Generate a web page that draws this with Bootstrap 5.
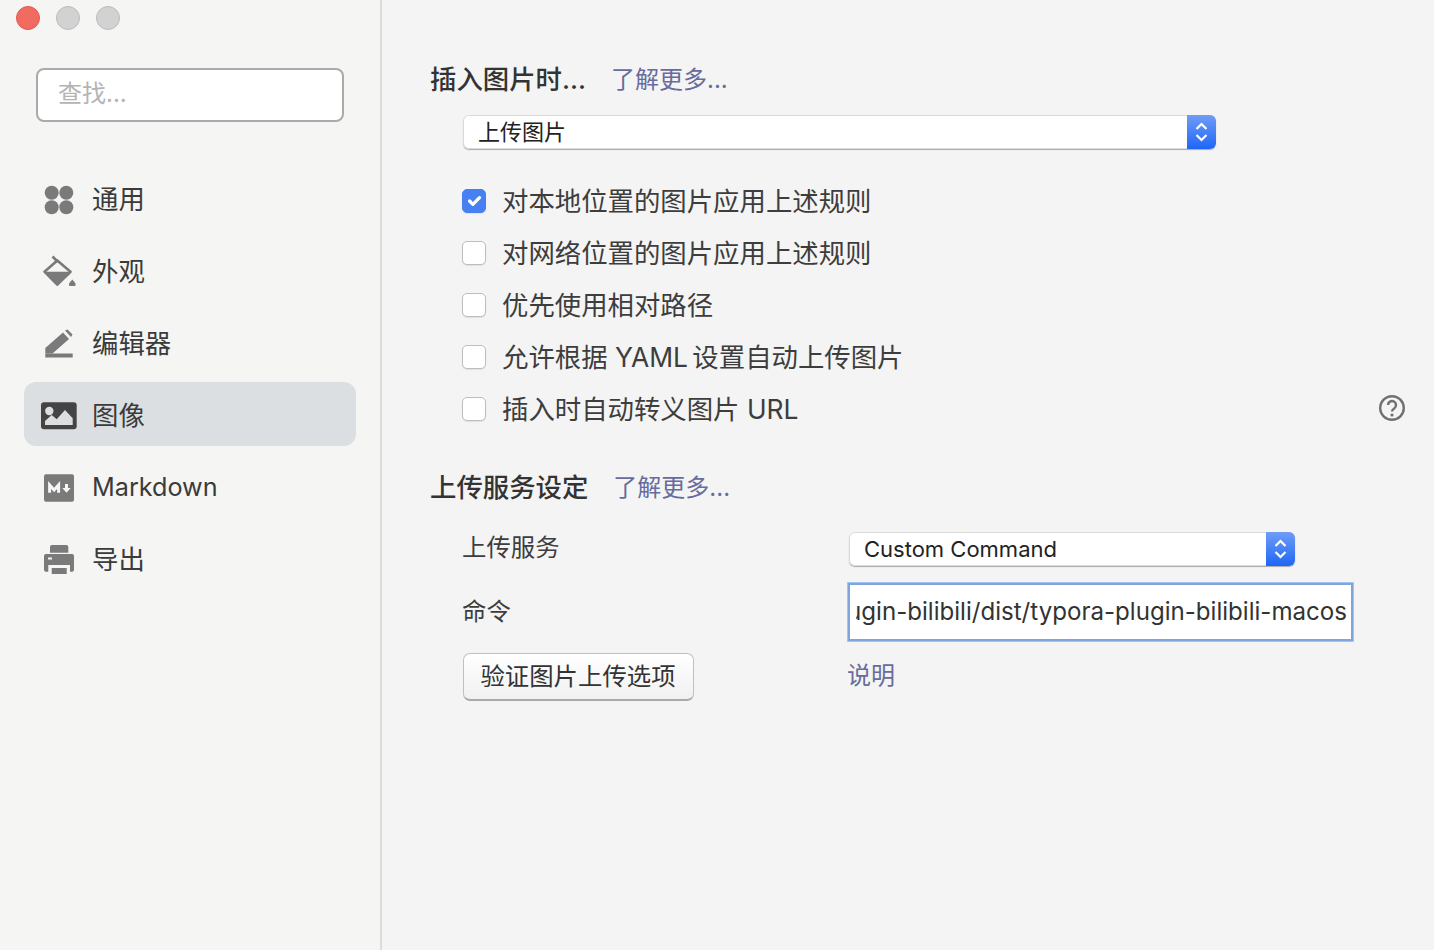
<!DOCTYPE html>
<html lang="zh">
<head>
<meta charset="utf-8">
<title>偏好设置</title>
<link rel="stylesheet" href="https://cdn.jsdelivr.net/npm/bootstrap@5.3.0/dist/css/bootstrap.min.css">
<style>
html,body{height:100%;overflow:hidden}
body{background:#f4f4f4;color:#333;font-family:"Inter","Noto Sans CJK SC",sans-serif;font-size:26.4px;line-height:36px}
.shell{height:950px}
.side{width:382px;flex:none;background:#f5f5f4;border-right:2px solid #dcdcdc}
.lights{padding:6px 0 0 16px;gap:16px}
.dot-light{width:24px;height:24px;border-radius:50%;background:#d2d2d2;border:1px solid #bcbcbc}
.dot-red{background:#f26b60;border-color:#e05a50}
.find-box{margin:38px 0 0 36px;width:308px;height:54px;border:2px solid #aaa;border-radius:8px;background:#fff;font-size:24px;padding:0 20px 4px;color:#333;font-family:inherit}
.find-box::placeholder{color:#b4b4b4;opacity:1}
.find-box:focus{outline:none}
.menu-list{margin:44px 0 0 24px;width:332px;gap:8px}
.menu-row{height:64px;border-radius:12px;padding:2px 0 0 15px;color:#3b3b3b;gap:13px;text-decoration:none}
.menu-row.on{background:#dcdfe2}
.menu-row svg{width:40px;height:40px;flex:none}
.md-name{font-size:25.2px}
.ico{fill:#7a7a7a}
.main-pane{padding:0 28px 0 48px;min-width:0}
.sec-head{height:36px;font-weight:500;color:#333}
.sec-link{font-size:24px;font-weight:400;color:#676b9d;text-decoration:none;margin:2px 0 0 25px}
.pick{height:34px;background:#fff;border-radius:6px;box-shadow:inset 0 0 0 1px #dadada,0 1px 1px 0 #aaa;font-size:22px;color:#222;padding-left:15px;overflow:hidden}
.pick-wide{margin:18px 0 0 33px;width:753px}
.pick-mid{width:446px;margin-left:1px}
.pick-btn{width:29px;height:34px;margin-left:auto;background:linear-gradient(#6f9df6,#1f66f6)}
.pick-btn svg{width:29px;height:34px;display:block}
.opts{margin:34px 0 0 32px;gap:16px}
.opt{height:36px;margin:0;padding:0;gap:16px}
.opt .form-check-input{width:24px;height:24px;margin:0 0 1px;border:1px solid #bdbdbd;border-radius:5px;float:none;background-color:#fff;flex:none;box-shadow:0 1px 1px #e2e2e2}
.opt .form-check-input:checked{background-color:#4680f2;border-color:#4680f2}
.opt .form-check-label{color:#3d3d3d}
.yaml-word{margin-right:-3px}
.help-ico{width:28px;height:28px;margin:0 0 2px auto;flex:none}
.head-two{margin-top:42px}
.set-row{margin-left:32px}
.row-one{margin-top:27px;height:34px}
.row-two{margin-top:17px}
.row-three{margin-top:12px}
.set-name{width:386px;flex:none;font-size:24.4px;color:#3d3d3d;padding-bottom:2px}
.row-one .set-name{padding-bottom:4px}
.row-three .set-name{padding-bottom:0}
.cmd-box{width:505px;height:58px;border:2px solid #7ea6dc;box-shadow:0 0 0 1px #a5c5f0;background:#fff;font-size:24.1px;color:#333;padding:0 4px 0 6px}
.cmd-clip{overflow:hidden;white-space:nowrap;justify-content:flex-end;width:100%}
.verify{width:231px;height:48px;padding:0 1px 0 0;margin-left:1px;background:linear-gradient(#fff,#f1f1f1);border:1px solid #c0c0c0;border-bottom:2px solid #aaa;border-radius:7px;font-size:24.4px;color:#333;line-height:1}
.doc-link{font-size:24px;color:#676b9d;text-decoration:none;margin:0 0 2px -1px}
</style>
</head>
<body>
<div class="shell d-flex">
  <aside class="side">
    <div class="lights d-flex"><span class="dot-light dot-red"></span><span class="dot-light"></span><span class="dot-light"></span></div>
    <input class="find-box d-block" type="text" placeholder="查找...">
    <nav class="menu-list d-flex flex-column">
      <a class="menu-row d-flex align-items-center" href="#"><svg viewBox="0 0 40 40"><g class="ico"><circle cx="12.7" cy="13.7" r="7"/><circle cx="27.3" cy="13.7" r="7"/><circle cx="12.7" cy="28.3" r="7"/><circle cx="27.3" cy="28.3" r="7"/></g></svg><span>通用</span></a>
      <a class="menu-row d-flex align-items-center" href="#"><svg viewBox="0 0 40 40"><path d="M13.5 5.5l5.5 5.5" stroke="#7a7a7a" stroke-width="2.6" fill="none"/><path d="M18.3 9.5L5.5 20.7 18.3 33.5 31.5 20.7z" fill="none" stroke="#7a7a7a" stroke-width="2.6" stroke-linejoin="round"/><path class="ico" d="M4.3 20.7h28.4L18.3 35z"/><path class="ico" d="M33.3 28.5c1.2 1.7 3.4 3.6 3.4 5a1.5 1.5 0 0 1-1.5 1.5h-3.8a1.5 1.5 0 0 1-1.5-1.5c0-1.4 2.2-3.3 3.4-5z"/></svg><span>外观</span></a>
      <a class="menu-row d-flex align-items-center" href="#"><svg viewBox="0 0 40 40"><g class="ico"><rect x="6.3" y="30.5" width="27.4" height="4"/><polygon points="6.3,30.5 6.3,25 24,9.5 30,16 13.5,30.5"/><polygon points="26,7.5 28.5,6.5 33.5,11.5 32,14"/></g></svg><span>编辑器</span></a>
      <a class="menu-row on d-flex align-items-center" href="#"><svg viewBox="0 0 40 40"><rect x="2" y="7.3" width="35.7" height="27" rx="3" fill="#444"/><circle cx="10.3" cy="16" r="4.2" fill="#dcdfe2"/><polygon points="6,30 6,26 12.7,20 17.7,24.3 26,15 33.7,23.3 33.7,30" fill="#dcdfe2"/></svg><span>图像</span></a>
      <a class="menu-row d-flex align-items-center" href="#"><svg viewBox="0 0 40 40"><rect class="ico" x="5" y="7.3" width="30" height="27.4" rx="2"/><path d="M10.6 25.7V18l4.5 5 4.5-5v7.7" fill="none" stroke="#f5f5f4" stroke-width="3"/><path d="M27.5 17v5" stroke="#f5f5f4" stroke-width="3"/><path d="M23.3 21h8.4l-4.2 4.7z" fill="#f5f5f4"/></svg><span class="md-name">Markdown</span></a>
      <a class="menu-row d-flex align-items-center" href="#"><svg viewBox="0 0 40 40"><path class="ico" d="M11 13.7V8a2 2 0 0 1 2-2h14.3a2 2 0 0 1 2 2v5.7z"/><rect class="ico" x="5" y="15" width="30" height="17.7" rx="2"/><rect x="9.3" y="26" width="21.7" height="9" fill="#f5f5f4"/><rect class="ico" x="12.7" y="29" width="15" height="6"/><rect x="9" y="18.5" width="4" height="2" fill="#f5f5f4"/></svg><span>导出</span></a>
    </nav>
  </aside>
  <main class="main-pane flex-grow-1">
    <div class="sec-head d-flex align-items-center" style="margin-top:61px"><span>插入图片时...</span><a class="sec-link" href="#">了解更多...</a></div>
    <div class="pick pick-wide d-flex align-items-center"><span>上传图片</span><span class="pick-btn"><svg viewBox="0 0 29 34"><path d="M9.5 14l5-5 5 5M9.5 20l5 5 5-5" fill="none" stroke="#fff" stroke-width="2.2"/></svg></span></div>
    <div class="opts d-flex flex-column">
      <div class="form-check opt d-flex align-items-center"><input class="form-check-input" type="checkbox" id="c1" checked><label class="form-check-label" for="c1">对本地位置的图片应用上述规则</label></div>
      <div class="form-check opt d-flex align-items-center"><input class="form-check-input" type="checkbox" id="c2"><label class="form-check-label" for="c2">对网络位置的图片应用上述规则</label></div>
      <div class="form-check opt d-flex align-items-center"><input class="form-check-input" type="checkbox" id="c3"><label class="form-check-label" for="c3">优先使用相对路径</label></div>
      <div class="form-check opt d-flex align-items-center"><input class="form-check-input" type="checkbox" id="c4"><label class="form-check-label" for="c4">允许根据 <span class="yaml-word">YAML</span> 设置自动上传图片</label></div>
      <div class="form-check opt d-flex align-items-center"><input class="form-check-input" type="checkbox" id="c5"><label class="form-check-label" for="c5">插入时自动转义图片 URL</label>
        <svg class="help-ico" viewBox="0 0 28 28"><circle cx="14" cy="14" r="11.8" fill="none" stroke="#707070" stroke-width="2.4"/><path d="M10 11a4 4 0 1 1 6.2 3.4c-1.4.9-2.2 1.5-2.2 3.1" fill="none" stroke="#707070" stroke-width="2.4"/><circle cx="14" cy="21" r="1.6" fill="#707070"/></svg></div>
    </div>
    <div class="sec-head head-two d-flex align-items-center"><span>上传服务设定</span><a class="sec-link" href="#">了解更多...</a></div>
    <div class="set-row row-one d-flex align-items-center"><span class="set-name">上传服务</span><div class="pick pick-mid d-flex align-items-center"><span>Custom Command</span><span class="pick-btn"><svg viewBox="0 0 29 34"><path d="M9.5 14l5-5 5 5M9.5 20l5 5 5-5" fill="none" stroke="#fff" stroke-width="2.2"/></svg></span></div></div>
    <div class="set-row row-two d-flex align-items-center"><span class="set-name">命令</span><div class="cmd-box d-flex align-items-center"><div class="cmd-clip d-flex">typora-plugin-bilibili/dist/typora-plugin-bilibili-macos</div></div></div>
    <div class="set-row row-three d-flex align-items-center"><span class="set-name"><button class="btn verify" type="button">验证图片上传选项</button></span><a class="doc-link" href="#">说明</a></div>
  </main>
</div>
<script src="https://cdn.jsdelivr.net/npm/bootstrap@5.3.0/dist/js/bootstrap.bundle.min.js"></script>
</body>
</html>
